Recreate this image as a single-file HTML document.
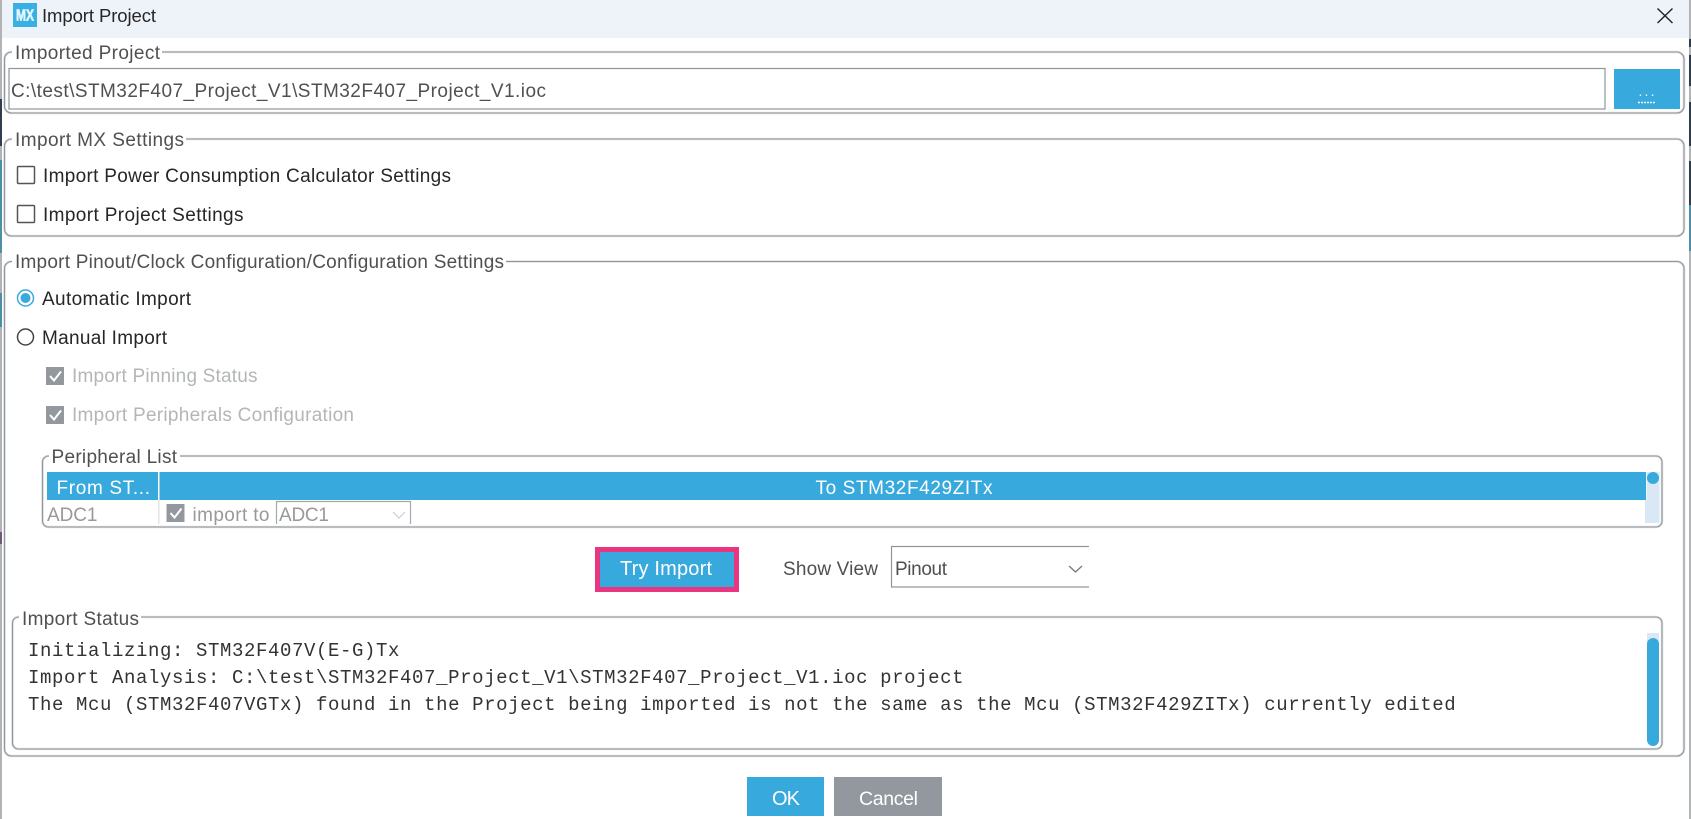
<!DOCTYPE html>
<html><head><meta charset="utf-8"><title>Import Project</title>
<style>
html,body{margin:0;padding:0;background:#fff;width:1691px;height:819px;overflow:hidden}
svg{display:block}
text{font-family:"Liberation Sans",sans-serif;font-size:19px;fill:#505050}
.d{fill:#262626}.g{fill:#b3b6b8}.w{fill:#fff}
.m{font-family:"Liberation Mono",monospace;font-size:19px;letter-spacing:.6px;fill:#333}
.h{fill:none;stroke:#dfe2e4;stroke-width:2.6}
.b{fill:none;stroke:#90979c;stroke-width:1.1}
</style></head><body>
<svg width="1691" height="819" viewBox="0 0 1691 819" xmlns="http://www.w3.org/2000/svg">
<rect width="1691" height="819" fill="#fff"/>
<rect x="0" y="0" width="2" height="819" fill="#b2b3b4"/>
<rect x="0" y="99" width="2" height="47" fill="#2f3d4c"/>
<rect x="0" y="160" width="2" height="93" fill="#4f8fa5"/>
<rect x="0" y="293" width="2" height="34" fill="#4f8fa5"/>
<rect x="0" y="532" width="2" height="12" fill="#6f5a78"/>
<rect x="1689" y="0" width="2" height="819" fill="#b2b3b4"/>
<rect x="1689" y="39" width="2" height="8" fill="#2f3d4c"/>
<rect x="1689" y="55" width="2" height="31" fill="#2f3d4c"/>
<rect x="1689" y="102" width="2" height="44" fill="#2f3d4c"/>
<rect x="1689" y="161" width="2" height="44" fill="#2f3d4c"/>
<rect x="1689" y="205" width="2" height="46" fill="#4f8fa5"/>
<rect x="2" y="0" width="1687" height="38" fill="#eef3fa"/>
<rect x="13" y="3" width="24" height="24" fill="#38b0e3"/>
<text x="16" y="20.500" style="font-size:16px;font-weight:bold;fill:#e4f5fd;stroke:#e4f5fd;stroke-width:.7px" textLength="18" lengthAdjust="spacingAndGlyphs">MX</text>
<text x="42" y="22" class="d" style="font-size:18.500px" textLength="114">Import Project</text>
<path d="M1657.500 8.500L1672.500 23M1672.500 8.500L1657.500 23" stroke="#222" stroke-width="1.4" fill="none"/>

<rect class="h" x="4.500" y="52" width="1679.500" height="61" rx="7"/><rect class="b" x="4.500" y="52" width="1679.500" height="61" rx="7"/>
<rect x="12" y="44" width="150" height="18" fill="#fff"/>
<text x="15" y="59" textLength="145">Imported Project</text>
<rect x="9" y="68.500" width="1596" height="40.500" fill="#fff" stroke="#90979c" stroke-width="1.2"/>
<text x="11" y="97" textLength="535">C:\test\STM32F407_Project_V1\STM32F407_Project_V1.ioc</text>
<rect x="1614" y="69" width="66" height="40" fill="#38a9dc"/>
<text x="1638.500" y="96" class="w" textLength="16" style="font-size:14px">...</text>
<line x1="1638" x2="1655" y1="102.500" y2="102.500" stroke="#fff" stroke-width="1.500" stroke-dasharray="2 1"/>

<rect class="h" x="4.500" y="139" width="1679.500" height="97" rx="7"/><rect class="b" x="4.500" y="139" width="1679.500" height="97" rx="7"/>
<rect x="12" y="131" width="174" height="18" fill="#fff"/>
<text x="15" y="146" textLength="169">Import MX Settings</text>
<rect x="17.500" y="166.500" width="17" height="17" rx="1" fill="#fff" stroke="#555" stroke-width="1.500"/>
<text x="43" y="182" class="d" textLength="408">Import Power Consumption Calculator Settings</text>
<rect x="17.500" y="205.500" width="17" height="17" rx="1" fill="#fff" stroke="#555" stroke-width="1.500"/>
<text x="43" y="221" class="d" textLength="200.500">Import Project Settings</text>

<rect class="h" x="4.500" y="261.500" width="1679.500" height="494.500" rx="7"/><rect class="b" x="4.500" y="261.500" width="1679.500" height="494.500" rx="7"/>
<rect x="12" y="253" width="494" height="18" fill="#fff"/>
<text x="15" y="268" textLength="489">Import Pinout/Clock Configuration/Configuration Settings</text>
<circle cx="25.500" cy="298" r="8" fill="#fff" stroke="#38a9dc" stroke-width="1.500"/>
<circle cx="25.500" cy="298" r="5" fill="#38a9dc"/>
<text x="42" y="305" class="d" textLength="149">Automatic Import</text>
<circle cx="25.500" cy="337" r="8" fill="#fff" stroke="#444" stroke-width="1.500"/>
<text x="42" y="344" class="d" textLength="125">Manual Import</text>

<rect x="46" y="367" width="18" height="18" fill="#92989e"/>
<path d="M50 376l4 4.500 7-9" stroke="#fff" stroke-width="2" fill="none"/>
<text x="72" y="382" class="g" textLength="185.500">Import Pinning Status</text>
<rect x="46" y="406" width="18" height="18" fill="#92989e"/>
<path d="M50 415l4 4.500 7-9" stroke="#fff" stroke-width="2" fill="none"/>
<text x="72" y="421" class="g" textLength="282">Import Peripherals Configuration</text>

<rect class="h" x="42.500" y="456" width="1619.500" height="71" rx="6"/><rect class="b" x="42.500" y="456" width="1619.500" height="71" rx="6"/>
<rect x="49" y="448" width="131" height="18" fill="#fff"/>
<text x="51.500" y="463" textLength="125.500">Peripheral List</text>
<rect x="47" y="472" width="1599" height="28" fill="#38a9dc"/>
<rect x="158" y="472" width="1.500" height="28" fill="#fff"/>
<text x="56.500" y="494" class="w" textLength="93.500">From ST...</text>
<text x="815.500" y="494" class="w" textLength="177">To STM32F429ZITx</text>
<text x="47" y="521" style="fill:#999" textLength="50.500">ADC1</text>
<rect x="158" y="500" width="1.500" height="24" fill="#e2e4e6"/>
<rect x="166.500" y="504" width="18" height="18" fill="#92989e"/>
<path d="M170.500 513l4 4.500 7-9" stroke="#fff" stroke-width="2" fill="none"/>
<text x="192.500" y="521" style="fill:#999" textLength="77">import to</text>
<path d="M276.500 524V501.500H410.500V524" fill="none" stroke="#a4a9ad" stroke-width="1.200"/>
<text x="279" y="521" style="fill:#999" textLength="50">ADC1</text>
<path d="M393 512l6 6 6-6" fill="none" stroke="#ccc" stroke-width="1.200"/>
<rect x="1646.500" y="472" width="13" height="51" fill="#dae8f5"/>
<rect x="1645" y="500" width="2" height="23" fill="#dae8f5"/>
<circle cx="1653" cy="478" r="6" fill="#38a9dc"/>

<rect x="595" y="547" width="144" height="45" fill="#ea3680"/>
<rect x="600" y="552" width="134" height="35" fill="#38a9dc"/>
<text x="620" y="575" class="w" style="font-size:20px" textLength="92">Try Import</text>
<text x="783" y="575" textLength="95">Show View</text>
<path d="M1089 546.500H891.500V587H1089" fill="none" stroke="#90979c" stroke-width="1.200"/>
<text x="895" y="575" textLength="52">Pinout</text>
<path d="M1069 566l6.500 6 6.500-6" fill="none" stroke="#777" stroke-width="1.300"/>

<rect class="h" x="12.500" y="617" width="1649.500" height="132" rx="6"/><rect class="b" x="12.500" y="617" width="1649.500" height="132" rx="6"/>
<rect x="19" y="609" width="122" height="18" fill="#fff"/>
<text x="22" y="625" textLength="117">Import Status</text>
<text x="28" y="656" class="m">Initializing: STM32F407V(E-G)Tx</text>
<text x="28" y="683" class="m">Import Analysis: C:\test\STM32F407_Project_V1\STM32F407_Project_V1.ioc project</text>
<text x="28" y="710" class="m">The Mcu (STM32F407VGTx) found in the Project being imported is not the same as the Mcu (STM32F429ZITx) currently edited</text>
<rect x="1647" y="633" width="12" height="20" fill="#dae8f5"/>
<rect x="1647" y="638" width="12" height="108" rx="6" fill="#38a9dc"/>

<rect x="747" y="777" width="77" height="39" fill="#38a9dc"/>
<text x="772" y="805" class="w" style="font-size:20px" textLength="28">OK</text>
<rect x="834" y="777" width="108" height="39" fill="#92989e"/>
<text x="859" y="805" class="w" style="font-size:19.500px" textLength="59">Cancel</text>
</svg>
</body></html>
